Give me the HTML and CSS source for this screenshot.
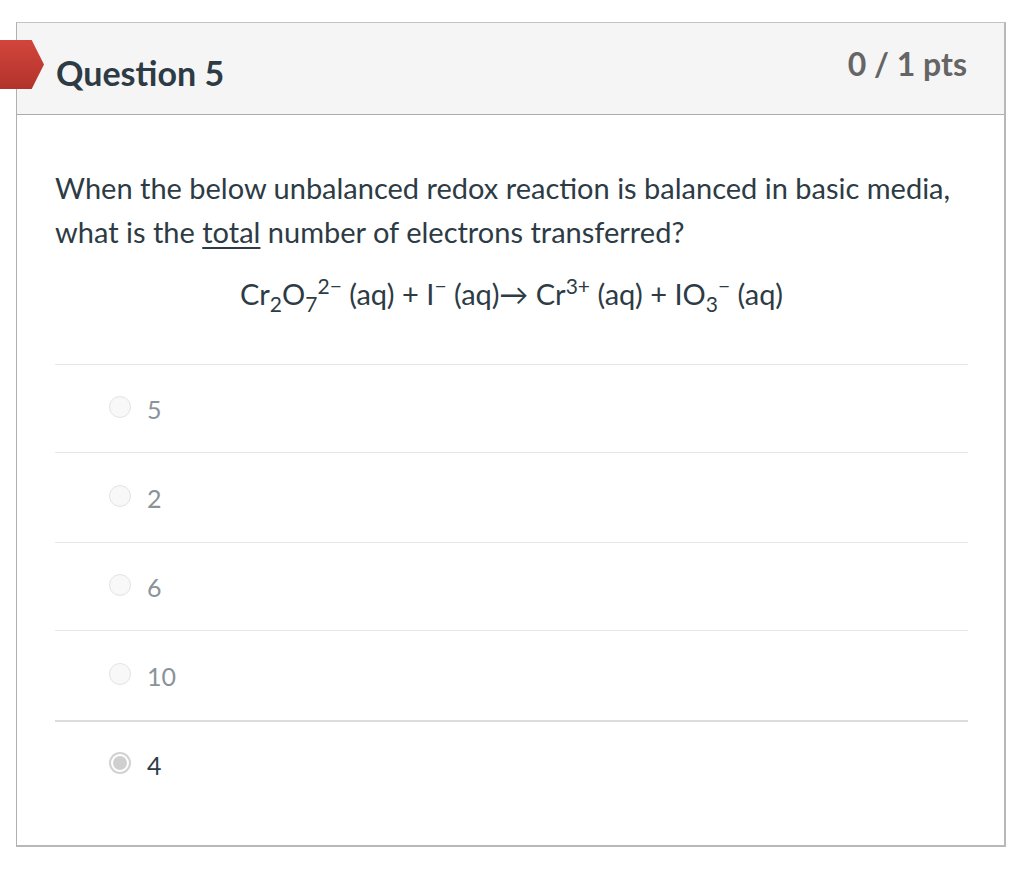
FILE: index.html
```html
<!DOCTYPE html>
<html>
<head>
<meta charset="utf-8">
<link rel="stylesheet" href="styles.css">
</head>
<body>
<div class="flag"></div>
<div class="card">
  <div class="header">
    <div class="title">Question 5</div>
    <div class="pts">0 / 1 pts</div>
  </div>
  <div class="content">
    <p class="question">When the below unbalanced redox reaction is balanced in basic media, what is the <u>total</u> number of electrons transferred?</p>
    <p class="equation">Cr<sub>2</sub>O<sub>7</sub><sup>2−</sup> (aq) + I<sup>−</sup> (aq)→ Cr<sup>3+</sup> (aq) + IO<sub>3</sub><sup>−</sup> (aq)</p>
    <div class="answers">
      <div class="answer"><span class="radio"></span><span class="label">5</span></div>
      <div class="answer"><span class="radio"></span><span class="label">2</span></div>
      <div class="answer"><span class="radio"></span><span class="label">6</span></div>
      <div class="answer"><span class="radio"></span><span class="label">10</span></div>
      <div class="answer selected"><span class="radio"></span><span class="label">4</span></div>
    </div>
  </div>
</div>
</body>
</html>
```

FILE: styles.css
```css
html, body {
  margin: 0;
  padding: 0;
  background: #ffffff;
}
body {
  font-family: Lato, "Liberation Sans", sans-serif;
  color: #2d3b45;
  padding: 22px 0 0 16px;
  position: relative;
  width: 1024px;
  height: 878px;
  box-sizing: border-box;
}
.flag {
  position: absolute;
  left: 0;
  top: 40px;
  width: 44px;
  height: 49px;
  background: linear-gradient(#d2453c, #b2332b);
  clip-path: polygon(0 0, 72% 0, 100% 50%, 72% 100%, 0 100%);
  z-index: 2;
}
.card {
  width: 990px;
  height: 825px;
  box-sizing: border-box;
  border-style: solid;
  border-width: 1px 2px 2px 1px;
  border-color: #c4c4c4 #b8b8b8 #b8b8b8 #b0b0b0;
}
.header {
  height: 92px;
  box-sizing: border-box;
  background: #f5f5f5;
  border-bottom: 1px solid #acacac;
  display: flex;
  justify-content: space-between;
  padding: 0 37px 0 39px;
}
.title {
  font-size: 34px;
  font-weight: 700;
  margin-top: 28px;
  line-height: 44px;
  color: #2d3b45;
}
.pts {
  font-size: 32px;
  font-weight: 700;
  margin-top: 20px;
  line-height: 42px;
  color: #656565;
}
.content {
  padding: 51px 36px 0 38px;
}
.question {
  margin: 0;
  font-size: 29px;
  line-height: 44px;
}
.question u {
  text-underline-offset: 4px;
  text-decoration-thickness: 2px;
}
.equation {
  margin: 18px 0 0 0;
  text-align: center;
  font-size: 29px;
  line-height: 44px;
}
.equation sub, .equation sup {
  font-size: 21px;
  line-height: 0;
}
.answers {
  margin-top: 48px;
}
.answer {
  border-top: 1px solid #e6e6e6;
  height: 88px;
  display: flex;
  align-items: center;
  padding-left: 54px;
  box-sizing: border-box;
}
.answer:nth-child(2), .answer:nth-child(4) {
  height: 90px;
}
.answer.selected {
  border-top: 2px solid #dcdcdc;
}
.radio {
  width: 20px;
  height: 20px;
  border: 1px solid #e3e3e3;
  border-radius: 50%;
  background: #f8f8f8;
  box-sizing: content-box;
  position: relative;
  margin-top: -4px;
  flex: none;
}
.selected .radio {
  border: 2px solid #d2d2d2;
  width: 18px;
  height: 18px;
  background: #fff;
}
.selected .radio::after {
  content: "";
  position: absolute;
  left: 2px;
  top: 2px;
  width: 14px;
  height: 14px;
  border-radius: 50%;
  background: #cfcfcf;
}
.label {
  margin-left: 16px;
  font-size: 25px;
  color: #8a939a;
}
.selected .label {
  color: #2d3b45;
}
```
